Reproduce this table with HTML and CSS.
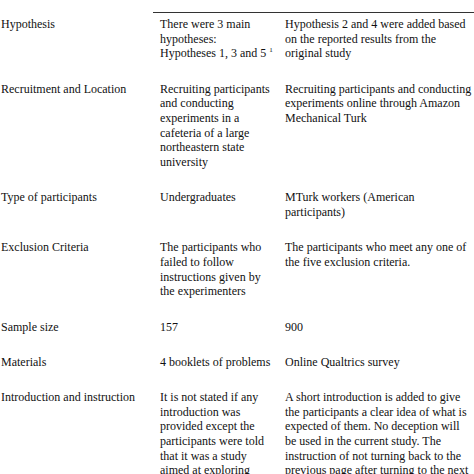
FILE: index.html
```html
<!DOCTYPE html>
<html>
<head>
<meta charset="utf-8">
<link rel="stylesheet" href="styles.css">
</head>
<body>
<div class="table">
  <div class="rule"></div>

  <div class="cell c1">Hypothesis</div>
  <div class="cell c2">There were 3 main hypotheses: Hypotheses 1, 3 and 5 <sup class="note">1</sup></div>
  <div class="cell c3">Hypothesis 2 and 4 were added based on the reported results from the original study</div>

  <div class="cell c1">Recruitment and Location</div>
  <div class="cell c2">Recruiting participants and conducting experiments in a cafeteria of a large northeastern state university</div>
  <div class="cell c3">Recruiting participants and conducting experiments online through Amazon Mechanical Turk</div>

  <div class="cell c1">Type of participants</div>
  <div class="cell c2">Undergraduates</div>
  <div class="cell c3">MTurk workers (American participants)</div>

  <div class="cell c1">Exclusion Criteria</div>
  <div class="cell c2">The participants who failed to follow instructions given by the experimenters</div>
  <div class="cell c3">The participants who meet any one of the five exclusion criteria.</div>

  <div class="cell c1">Sample size</div>
  <div class="cell c2">157</div>
  <div class="cell c3">900</div>

  <div class="cell c1">Materials</div>
  <div class="cell c2">4 booklets of problems</div>
  <div class="cell c3">Online Qualtrics survey</div>

  <div class="cell c1">Introduction and instruction</div>
  <div class="cell c2">It is not stated if any introduction was provided except the participants were told that it was a study aimed at exploring</div>
  <div class="cell c3">A short introduction is added to give the participants a clear idea of what is expected of them. No deception will be used in the current study. The instruction of not turning back to the previous page after turning to the next</div>
</div>
</body>
</html>
```

FILE: styles.css
```css
html, body {
  margin: 0;
  padding: 0;
  background: #ffffff;
}
body {
  width: 474px;
  height: 474px;
  overflow: hidden;
  font-family: "Liberation Serif", "Times New Roman", serif;
  font-size: 12px;
  line-height: 14.7px;
  color: #111111;
}
.table {
  display: grid;
  grid-template-columns: 153px 132px 189px;
  padding-top: 12px;
}
.rule {
  grid-column: 2 / 4;
  border-top: 1px solid #333333;
  height: 0;
  margin-bottom: 4px;
}
.cell {
  padding-bottom: 20.5px;
}
.c1 {
  padding-left: 1px;
}
.c2 {
  padding-left: 7px;
  padding-right: 11px;
}
.c3 {
  padding-right: 2px;
}
.note {
  font-size: 7px;
  line-height: 0;
  vertical-align: 5px;
}
```
